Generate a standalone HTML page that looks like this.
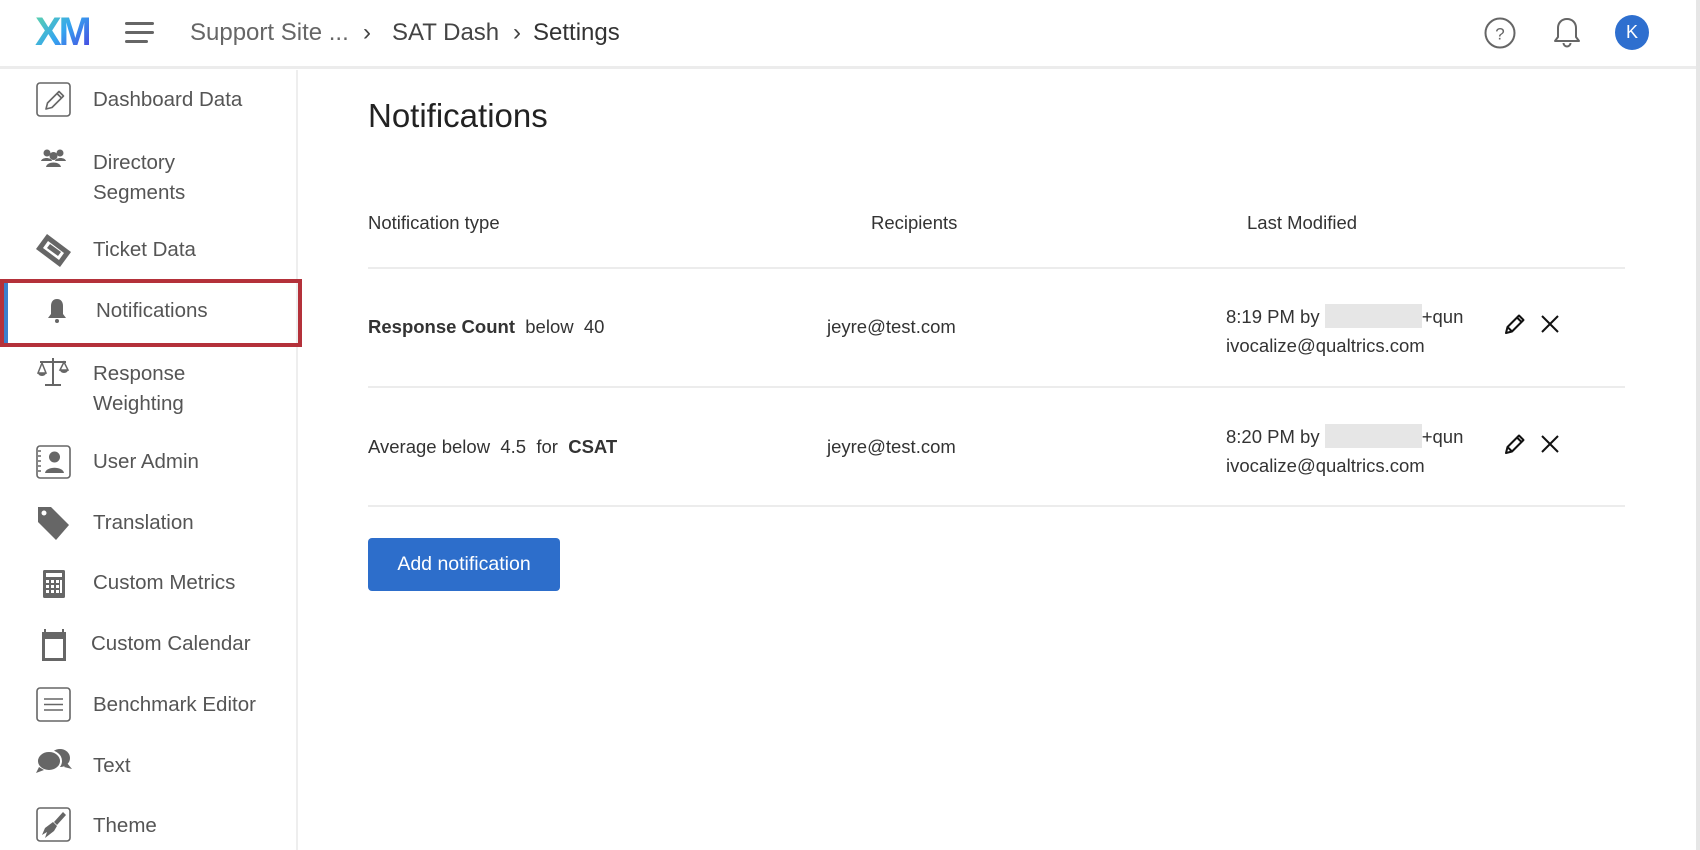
<!DOCTYPE html>
<html><head><meta charset="utf-8"><style>
*{margin:0;padding:0;box-sizing:border-box}
body{width:1700px;height:850px;background:#fff;font-family:"Liberation Sans",sans-serif;position:relative;overflow:hidden;color:#333}
.a{position:absolute;white-space:nowrap}
.side{color:#555;font-size:20.5px}
.ic{position:absolute}
</style></head><body>
<!-- header -->
<div class="a" style="left:0;top:0;width:1700px;height:69px;border-bottom:3px solid #ececec"></div>
<div class="a" style="left:35px;top:12px;font-size:40px;font-weight:bold;letter-spacing:-3px;background:linear-gradient(135deg,#5fd6a5,#35a6ef 50%,#4a3fe0);-webkit-background-clip:text;color:transparent;line-height:40px">XM</div>
<div class="a" style="left:125px;top:22px;width:29px;height:3px;background:#666;border-radius:2px"></div>
<div class="a" style="left:125px;top:31px;width:29px;height:3px;background:#666;border-radius:2px"></div>
<div class="a" style="left:125px;top:40px;width:23px;height:3px;background:#666;border-radius:2px"></div>
<div class="a" style="left:190px;top:19px;font-size:24px;color:#666">Support Site ...</div>
<div class="a" style="left:363px;top:19px;font-size:24px;color:#444">›</div>
<div class="a" style="left:392px;top:19px;font-size:24px;color:#444">SAT Dash</div>
<div class="a" style="left:513px;top:19px;font-size:24px;color:#444">›</div>
<div class="a" style="left:533px;top:19px;font-size:24px;color:#333">Settings</div>
<svg class="ic" style="left:1483px;top:16px" width="34" height="34" viewBox="0 0 34 34"><circle cx="17" cy="17" r="14.5" fill="none" stroke="#666" stroke-width="2"/><text x="17" y="23.5" text-anchor="middle" font-family="Liberation Sans" font-size="17" fill="#666">?</text></svg>
<svg class="ic" style="left:1553px;top:16px" width="28" height="34" viewBox="0 0 28 34"><path d="M14 3c-5.5 0-9 4-9 9v9l-3 4h24l-3-4v-9c0-5-3.5-9-9-9z" fill="none" stroke="#666" stroke-width="2" stroke-linejoin="round"/><path d="M10.5 27a3.5 3.5 0 0 0 7 0" fill="none" stroke="#666" stroke-width="2"/></svg>
<div class="a" style="left:1615px;top:15px;width:34px;height:35px;border-radius:50%;background:#2e6fcf;color:#fff;font-size:18px;text-align:center;line-height:35px">K</div>
<div class="a" style="left:1696px;top:0;width:4px;height:850px;background:#e6e6e6"></div>
<!-- sidebar -->
<div class="a" style="left:296px;top:70px;width:2px;height:780px;background:#eee"></div>
<div class="a" style="left:0;top:279px;width:302px;height:68px;border:4px solid #b4313a"></div>
<div class="a" style="left:4px;top:283px;width:4px;height:60px;background:#3b7fcc"></div>

<svg class="ic" style="left:36px;top:82px" width="35" height="35" viewBox="0 0 35 35"><rect x="1" y="1" width="33" height="33" rx="3" fill="none" stroke="#666" stroke-width="1.6"/><path d="M10 27l1.5-6L23 9.5l4.5 4.5L16 25.5z M21 11.5l4.5 4.5" fill="none" stroke="#666" stroke-width="1.6" stroke-linejoin="round"/></svg>
<div class="a side" style="left:93px;top:88px">Dashboard Data</div>

<svg class="ic" style="left:41px;top:148px" width="25" height="20" viewBox="0 0 25 20"><circle cx="6" cy="5" r="3.5" fill="#666"/><circle cx="19" cy="5" r="3.5" fill="#666"/><circle cx="12.5" cy="8" r="4" fill="#666"/><path d="M0 13c1-4 10-4 11 0zM14 13c1-4 10-4 11 0zM5 19c1-6 14-6 15 0z" fill="#666"/></svg>
<div class="a side" style="left:93px;top:148px;line-height:30px">Directory<br>Segments</div>

<svg class="ic" style="left:33px;top:232px" width="40" height="37" viewBox="0 0 40 37"><path d="M14 2l24 18-11 15L3 17z" fill="#666"/><path d="M15 9l16 12-5 7L10 16z" fill="#fff"/><path d="M17 12l11 8-3 4-11-8z" fill="#666"/></svg>
<div class="a side" style="left:93px;top:238px">Ticket Data</div>

<svg class="ic" style="left:47px;top:298px" width="20" height="26" viewBox="0 0 20 26"><path d="M10 1c-4 0-6 3-6 7v8l-3 4h18l-3-4V8c0-4-2-7-6-7z" fill="#666"/><circle cx="10" cy="23" r="2" fill="#666"/></svg>
<div class="a side" style="left:96px;top:299px">Notifications</div>

<svg class="ic" style="left:37px;top:357px" width="32" height="30" viewBox="0 0 32 30"><path d="M16 1v27M8 28h16M3 5h26" stroke="#666" stroke-width="2" fill="none"/><path d="M1 16l4-10 4 10zM23 13l4-8 4 8z" fill="none" stroke="#666" stroke-width="1.5"/><path d="M1 16a4 3 0 0 0 8 0zM23 13a4 3 0 0 0 8 0z" fill="#666"/></svg>
<div class="a side" style="left:93px;top:359px;line-height:30px">Response<br>Weighting</div>

<svg class="ic" style="left:36px;top:445px" width="35" height="34" viewBox="0 0 35 34"><rect x="1" y="1" width="33" height="32" rx="3" fill="none" stroke="#666" stroke-width="1.6"/><path d="M2 6h3M2 11h3M2 16h3M2 21h3M2 26h3" stroke="#666" stroke-width="1.5"/><circle cx="18.5" cy="12" r="5.5" fill="#666"/><path d="M9 28c1-7 18-7 19 0z" fill="#666"/></svg>
<div class="a side" style="left:93px;top:450px">User Admin</div>

<svg class="ic" style="left:36px;top:505px" width="34" height="36" viewBox="0 0 34 36"><path d="M2 2h13l18 18-13 15L2 17z" fill="#666"/><circle cx="8" cy="8" r="2.5" fill="#fff"/></svg>
<div class="a side" style="left:93px;top:511px">Translation</div>

<svg class="ic" style="left:43px;top:570px" width="22" height="28" viewBox="0 0 22 28"><rect width="22" height="28" rx="1.5" fill="#666"/><rect x="3" y="3" width="16" height="4" fill="#fff"/><g fill="#fff"><rect x="3" y="10" width="3" height="3"/><rect x="8" y="10" width="3" height="3"/><rect x="13" y="10" width="3" height="3"/><rect x="3" y="15" width="3" height="3"/><rect x="8" y="15" width="3" height="3"/><rect x="13" y="15" width="3" height="3"/><rect x="3" y="20" width="3" height="3"/><rect x="8" y="20" width="3" height="3"/><rect x="13" y="20" width="3" height="3"/><rect x="17" y="10" width="2" height="13"/></g></svg>
<div class="a side" style="left:93px;top:571px">Custom Metrics</div>

<svg class="ic" style="left:42px;top:629px" width="24" height="32" viewBox="0 0 24 32"><rect x="0" y="3" width="24" height="29" fill="#666"/><rect x="3" y="10" width="18" height="19" fill="#fff"/><rect x="2" y="0" width="2" height="5" fill="#666"/><rect x="20" y="0" width="2" height="5" fill="#666"/></svg>
<div class="a side" style="left:91px;top:632px">Custom Calendar</div>

<svg class="ic" style="left:36px;top:687px" width="35" height="35" viewBox="0 0 35 35"><rect x="1" y="1" width="33" height="33" rx="3" fill="none" stroke="#666" stroke-width="1.6"/><path d="M8 12h19M8 17.5h19M8 23h19" stroke="#666" stroke-width="1.6"/></svg>
<div class="a side" style="left:93px;top:693px">Benchmark Editor</div>

<svg class="ic" style="left:36px;top:748px" width="36" height="26" viewBox="0 0 36 26"><ellipse cx="24" cy="10" rx="10" ry="9" fill="#666"/><ellipse cx="13" cy="13" rx="12" ry="10" fill="#666" stroke="#fff" stroke-width="2"/><path d="M3 19l-3 6 8-3zM31 15l5 6-8-2z" fill="#666"/></svg>
<div class="a side" style="left:93px;top:754px">Text</div>

<svg class="ic" style="left:36px;top:807px" width="35" height="35" viewBox="0 0 35 35"><rect x="1" y="1" width="33" height="33" rx="3" fill="none" stroke="#666" stroke-width="1.6"/><path d="M27 5l3 3-9 10-3-3z" fill="#666"/><path d="M17 15l4 4-3 5-9 7 2-6-5 3 3-7z" fill="#666"/></svg>
<div class="a side" style="left:93px;top:814px">Theme</div>

<!-- main -->
<div class="a" style="left:368px;top:97px;font-size:33px;color:#222">Notifications</div>
<div class="a" style="left:368px;top:212px;font-size:18.5px;color:#333">Notification type</div>
<div class="a" style="left:871px;top:212px;font-size:18.5px;color:#333">Recipients</div>
<div class="a" style="left:1247px;top:212px;font-size:18.5px;color:#333">Last Modified</div>
<div class="a" style="left:368px;top:267px;width:1257px;height:2px;background:#ececec"></div>
<div class="a" style="left:368px;top:386px;width:1257px;height:2px;background:#ececec"></div>
<div class="a" style="left:368px;top:505px;width:1257px;height:2px;background:#ececec"></div>

<div class="a" style="left:368px;top:316px;font-size:18.5px;color:#333"><b>Response Count</b>&nbsp; below&nbsp; 40</div>
<div class="a" style="left:827px;top:316px;font-size:18.5px;color:#333">jeyre@test.com</div>
<div class="a" style="left:1226px;top:302px;font-size:18.5px;color:#333;line-height:29px">8:19 PM by <span style="display:inline-block;width:97px;height:24px;background:#e6e6e6;vertical-align:-5px"></span>+qun<br>ivocalize@qualtrics.com</div>

<div class="a" style="left:368px;top:436px;font-size:18.5px;color:#333">Average below&nbsp; 4.5&nbsp; for&nbsp; <b>CSAT</b></div>
<div class="a" style="left:827px;top:436px;font-size:18.5px;color:#333">jeyre@test.com</div>
<div class="a" style="left:1226px;top:422px;font-size:18.5px;color:#333;line-height:29px">8:20 PM by <span style="display:inline-block;width:97px;height:24px;background:#e6e6e6;vertical-align:-5px"></span>+qun<br>ivocalize@qualtrics.com</div>

<svg class="ic" style="left:1503px;top:312px" width="24" height="24" viewBox="0 0 24 24"><path d="M3 21l1.5-6L16 3.5l4.5 4.5L9 19.5z M14 5.5l4.5 4.5 M4.5 15l4.5 4.5" fill="none" stroke="#111" stroke-width="2" stroke-linejoin="round"/></svg>
<svg class="ic" style="left:1540px;top:314px" width="20" height="20" viewBox="0 0 20 20"><path d="M2 2l16 16M18 2L2 18" stroke="#111" stroke-width="2"/></svg>
<svg class="ic" style="left:1503px;top:432px" width="24" height="24" viewBox="0 0 24 24"><path d="M3 21l1.5-6L16 3.5l4.5 4.5L9 19.5z M14 5.5l4.5 4.5 M4.5 15l4.5 4.5" fill="none" stroke="#111" stroke-width="2" stroke-linejoin="round"/></svg>
<svg class="ic" style="left:1540px;top:434px" width="20" height="20" viewBox="0 0 20 20"><path d="M2 2l16 16M18 2L2 18" stroke="#111" stroke-width="2"/></svg>

<div class="a" style="left:368px;top:538px;width:192px;height:53px;background:#2d6ecb;border-radius:4px;color:#fff;font-size:19.5px;text-align:center;line-height:53px">Add notification</div>
</body></html>
